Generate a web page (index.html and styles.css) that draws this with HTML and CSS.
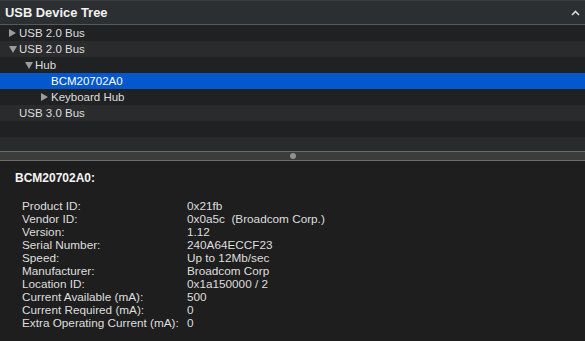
FILE: index.html
```html
<!DOCTYPE html>
<html>
<head>
    <title>USB Device Tree</title>
    <link rel="stylesheet" href="styles.css">
</head>
<body>
    <div class="tree-header">
        <span class="tree-title">USB Device Tree</span>
        <svg class="caret" width="9" height="6" viewBox="0 0 9 6"><path d="M1 5 L4.5 1.5 L8 5" fill="none" stroke="#d8d8d8" stroke-width="1.6"/></svg>
    </div>

    <div class="tree">
        <div class="row lvl0"><span class="tri right"></span>USB 2.0 Bus</div>
        <div class="row lvl0"><span class="tri down"></span>USB 2.0 Bus</div>
        <div class="row lvl1"><span class="tri down"></span>Hub</div>
        <div class="row lvl2 selected"><span class="tri none"></span>BCM20702A0</div>
        <div class="row lvl2"><span class="tri right"></span>Keyboard Hub</div>
        <div class="row lvl0"><span class="tri none"></span>USB 3.0 Bus</div>
        <div class="row"></div>
        <div class="row"></div>
    </div>

    <div class="splitter"><span class="grip"></span></div>

    <div class="detail">
        <h3>BCM20702A0:</h3>
        <div class="props">
            <span>Product ID:</span><span>0x21fb</span>
            <span>Vendor ID:</span><span>0x0a5c&nbsp; (Broadcom Corp.)</span>
            <span>Version:</span><span>1.12</span>
            <span>Serial Number:</span><span>240A64ECCF23</span>
            <span>Speed:</span><span>Up to 12Mb/sec</span>
            <span>Manufacturer:</span><span>Broadcom Corp</span>
            <span>Location ID:</span><span>0x1a150000 / 2</span>
            <span>Current Available (mA):</span><span>500</span>
            <span>Current Required (mA):</span><span>0</span>
            <span>Extra Operating Current (mA):</span><span>0</span>
        </div>
    </div>
</body>
</html>
```

FILE: styles.css
```css
body {
    margin: 0;
    background: #1e1e1f;
    font-family: "Liberation Sans", Arial, sans-serif;
    font-size: 11.5px;
    color: #dedede;
    overflow: hidden;
}
.tree-header {
    height: 23px;
    border-top: 1px solid #3c3e40;
    border-bottom: 1px solid #56585a;
    background: #2c2f31;
    display: flex;
    align-items: center;
    justify-content: space-between;
    padding: 0 5px 0 5px;
}
.tree-title {
    font-weight: bold;
    font-size: 12.9px;
    color: #f2f2f2;
}
.tree {
    height: 126px;
    overflow: hidden;
}
.row {
    height: 16px;
    display: flex;
    align-items: center;
    background: #1f2123;
}
.row:nth-child(even) {
    background: #2a2b2d;
}
.row.selected {
    background: #0258cc;
    color: #ffffff;
}
.lvl0 { padding-left: 9px; }
.lvl1 { padding-left: 25px; }
.lvl2 { padding-left: 41px; }
.tri {
    width: 10px;
    height: 8px;
    flex: none;
    display: inline-block;
}
.tri.right {
    width: 0;
    height: 0;
    border-top: 4px solid transparent;
    border-bottom: 4px solid transparent;
    border-left: 7px solid #9c9c9c;
    margin-right: 3px;
}
.tri.down {
    width: 0;
    height: 0;
    border-left: 4px solid transparent;
    border-right: 4px solid transparent;
    border-top: 7px solid #9c9c9c;
    margin-right: 2px;
}
.splitter {
    height: 8px;
    border-top: 1px solid #6b6c6b;
    border-bottom: 1px solid #6b6c6b;
    background: #3c3d3b;
    display: flex;
    align-items: center;
    justify-content: center;
}
.grip {
    width: 6px;
    height: 6px;
    border-radius: 50%;
    background: #8e8f8e;
}
.detail {
    padding: 10px 15px;
}
.detail h3 {
    margin: 0 0 14px 0;
    font-size: 12px;
    font-weight: bold;
    color: #f4f4f4;
    line-height: 14px;
}
.props {
    display: grid;
    grid-template-columns: 165px auto;
    font-size: 11.75px;
    line-height: 13px;
    padding-left: 7px;
}
```
